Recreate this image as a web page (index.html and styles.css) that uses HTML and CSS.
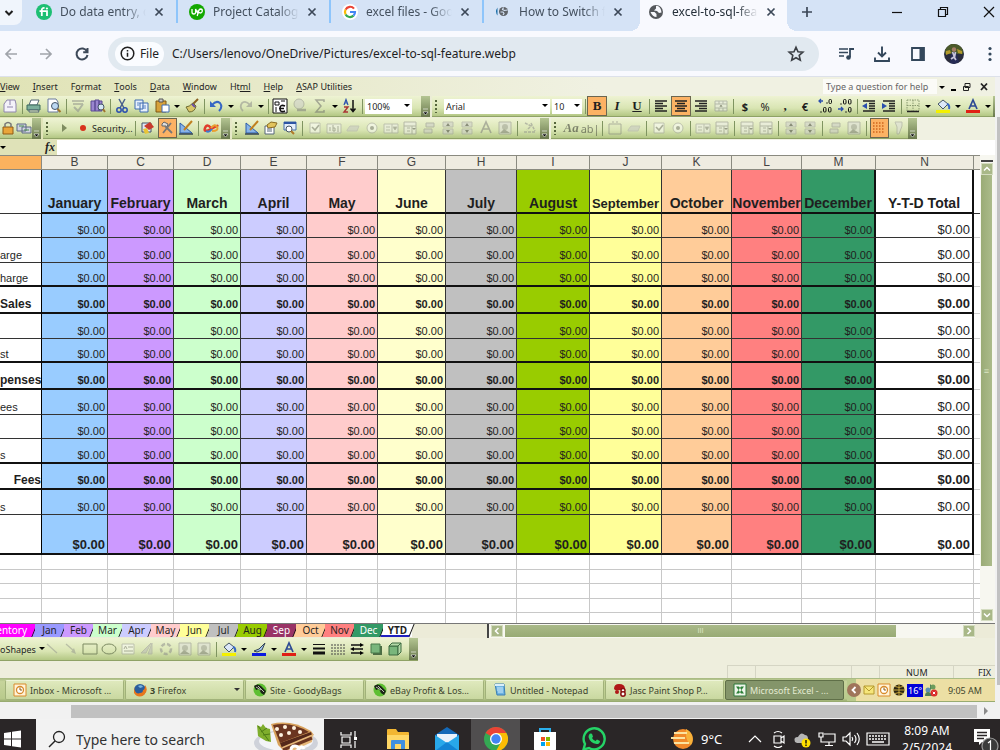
FILE: index.html
```html
<!DOCTYPE html>
<html lang="en">
<head>
    <meta charset="UTF-8">
    <meta name="viewport" content="width=device-width, initial-scale=1.0">
    <title>excel-to-sql-feature.webp</title>
    <link rel="stylesheet" href="styles.css">
</head>
<body>
    <!-- Browser tabs -->
    <div class="tabstrip">
        <button class="tab-search" aria-label="Search tabs"><svg width="10" height="10" viewBox="0 0 10 10"><path d="M1.500 3l3.500 3.500L8.500 3" fill="none" stroke="#1f1f1f" stroke-width="2"/></svg></button>
        <div class="tab">
            <svg width="16" height="16" viewBox="0 0 16 16"><circle cx="8" cy="8" r="8" fill="#1dbf73"/><path d="M3.500 7.200h7.500V12M5.800 12V6q0-2.300 2.700-2" fill="none" stroke="#fff" stroke-width="1.800"/><circle cx="10.900" cy="4.500" r="1.100" fill="#fff"/></svg>
            <span class="tab-title">Do data entry, c</span>
            <button class="close" aria-label="Close tab"><svg width="10" height="10" viewBox="0 0 10 10"><path d="M1.500 1.500l7 7m0-7l-7 7"/></svg></button>
        </div>
        <div class="tab">
            <svg width="16" height="16" viewBox="0 0 16 16"><circle cx="8" cy="8" r="8" fill="#14a800"/><path d="M3 5v3q0 2 1.800 2T6.600 8V5q1 3.500 3 5M8.200 12l1.300-5q.7-2 2.200-2 1.800.2 1.600 2.200-.3 1.800-2 1.800-1.600-.2-3-2.500" fill="none" stroke="#fff" stroke-width="1.300"/></svg>
            <span class="tab-title">Project Catalog</span>
            <button class="close" aria-label="Close tab"><svg width="10" height="10" viewBox="0 0 10 10"><path d="M1.500 1.500l7 7m0-7l-7 7"/></svg></button>
        </div>
        <div class="tab">
            <svg width="16" height="16" viewBox="0 0 16 16"><circle cx="8" cy="8" r="8" fill="#fff"/><g fill="none" stroke-width="2.200"><path d="M12 4.600A5 5 0 0 0 3.600 5.600" stroke="#ea4335"/><path d="M3.600 5.600a5 5 0 0 0 0 4.800" stroke="#fbbc05"/><path d="M3.600 10.400A5 5 0 0 0 11.500 11.600" stroke="#34a853"/><path d="M11.500 11.600A5 5 0 0 0 13 8H8" stroke="#4285f4"/></g></svg>
            <span class="tab-title">excel files - Goo</span>
            <button class="close" aria-label="Close tab"><svg width="10" height="10" viewBox="0 0 10 10"><path d="M1.500 1.500l7 7m0-7l-7 7"/></svg></button>
        </div>
        <div class="tab last">
            <svg width="16" height="16" viewBox="0 0 16 16"><path d="M2.500 3.500q-3 4 0 8z" fill="#1b6ea8"/><circle cx="8.500" cy="7.500" r="4.500" fill="#5f6368"/><path d="M5.500 8h2.500l1 1.500-1 1.500M8.500 3.500l-1 2 2 1 3-.5" fill="none" stroke="#d5e3f6" stroke-width="1.200"/></svg>
            <span class="tab-title">How to Switch f</span>
            <button class="close" aria-label="Close tab"><svg width="10" height="10" viewBox="0 0 10 10"><path d="M1.500 1.500l7 7m0-7l-7 7"/></svg></button>
        </div>
        <div class="tab active">
            <svg width="16" height="16" viewBox="0 0 16 16"><circle cx="8" cy="8" r="7" fill="#55585c"/><path d="M2.500 8h4l2 2v3q-4 0-6-5zM8 2v2.500l-2 2 3 .5 2 2 2.500-.5Q13 3 9 1.800z" fill="#f8f9fe"/></svg>
            <span class="tab-title">excel-to-sql-fea</span>
            <button class="close" aria-label="Close tab"><svg width="10" height="10" viewBox="0 0 10 10"><path d="M1.500 1.500l7 7m0-7l-7 7"/></svg></button>
        </div>
        <button class="new-tab" aria-label="New tab"><svg width="12" height="12" viewBox="0 0 12 12"><path d="M6 1v10M1 6h10" stroke="#3c4858" stroke-width="1.700"/></svg></button>
        <div class="window-buttons">
            <button aria-label="Minimize"><svg width="12" height="12" viewBox="0 0 12 12"><path d="M1 6.500h10"/></svg></button>
            <button aria-label="Restore"><svg width="12" height="12" viewBox="0 0 12 12"><path d="M1.500 3.500h7v7h-7zM3.500 3.500v-2h7v7h-2"/></svg></button>
            <button aria-label="Close"><svg width="12" height="12" viewBox="0 0 12 12"><path d="M1 1l10 10M11 1L1 11"/></svg></button>
        </div>
    </div>

    <!-- Address bar -->
    <div class="navbar">
        <button aria-label="Back"><svg width="16" height="16" viewBox="0 0 16 16"><path d="M14 8H3M8 3L3 8l5 5" stroke="#a0a4aa"/></svg></button>
        <button aria-label="Forward"><svg width="16" height="16" viewBox="0 0 16 16"><path d="M2 8h11M8 3l5 5-5 5" stroke="#a0a4aa"/></svg></button>
        <button aria-label="Reload"><svg width="16" height="16" viewBox="0 0 16 16"><path d="M13 5.500A5.500 5.500 0 1 0 13.500 9M13.500 2v4.300H9.200" stroke="#3c4858" stroke-width="2"/></svg></button>
        <div class="omnibox">
            <button class="chip"><svg width="15" height="15" viewBox="0 0 15 15"><circle cx="7.500" cy="7.500" r="6.300" stroke="#1f1f1f" stroke-width="1.500"/><path d="M7.500 6.700v4M7.500 4v1.500" stroke="#1f1f1f" stroke-width="1.500"/></svg>File</button>
            <input type="text" aria-label="Address" value="C:/Users/lenovo/OneDrive/Pictures/excel-to-sql-feature.webp">
            <button aria-label="Bookmark"><svg width="18" height="18" viewBox="0 0 18 18"><path d="M9 2.200l2 4.500 4.900.5-3.700 3.200 1.100 4.800L9 12.700l-4.300 2.500 1.100-4.800-3.700-3.200 4.900-.5z" stroke="#3b3f44" stroke-width="1.600"/></svg></button>
        </div>
        <button aria-label="Media"><svg width="18" height="18" viewBox="0 0 18 18"><path d="M2 4h9M2 7.500h9M2 11h5" stroke="#33475b" stroke-width="1.700"/><path d="M13 12V4h4" stroke="#33475b" stroke-width="1.800"/><circle cx="11.500" cy="12.500" r="2.300" fill="#33475b"/></svg></button>
        <button aria-label="Downloads"><svg width="18" height="18" viewBox="0 0 18 18"><path d="M9 1.500V11M5 7.500L9 11.500l4-4M2 12.500V16h14v-3.500" stroke="#33475b" stroke-width="1.900"/></svg></button>
        <button aria-label="Side panel"><svg width="18" height="18" viewBox="0 0 18 18"><path d="M3 3h12v12H3z" stroke="#33475b" stroke-width="1.800"/><path d="M10.500 3H15v12h-4.500z" fill="#33475b"/></svg></button>
        <button aria-label="Profile"><svg width="20" height="20" viewBox="0 0 20 20"><circle cx="10" cy="10" r="10" fill="#2a2c3c"/><path d="M1 6q4-7 9-6 6 0 9 6v4H1z" fill="#4b5a2a"/><path d="M2 7l4-1 1 3-5 2zM13 5l5 2v3l-4-1z" fill="#b49a2c"/><circle cx="10" cy="5.500" r="2.200" fill="#a57b66"/><path d="M6 19l1-9 3-2 3 2 2 8-5 2z" fill="#272c56"/><path d="M8.500 8l2 5 1-5M7 15l3-2 2 3" stroke="#c9c5da" fill="none"/></svg></button>
        <button aria-label="Menu"><svg width="18" height="18" viewBox="0 0 18 18" fill="#33475b"><g fill="#33475b"><circle cx="9" cy="3.500" r="1.600"/><circle cx="9" cy="9" r="1.600"/><circle cx="9" cy="14.500" r="1.600"/></g></svg></button>
    </div>

    <div class="viewport">
        <main class="excel">
            <div class="menubar">
                <button><u>V</u>iew</button>
                <button><u>I</u>nsert</button>
                <button>F<u>o</u>rmat</button>
                <button><u>T</u>ools</button>
                <button><u>D</u>ata</button>
                <button><u>W</u>indow</button>
                <button>Ht<u>ml</u></button>
                <button><u>H</u>elp</button>
                <button><u>A</u>SAP Utilities</button>
                <input type="text" class="ask" aria-label="Help" placeholder="Type a question for help">
                <svg class="mdi" width="54" height="10" viewBox="0 0 54 10"><path d="M2 4h6L5 7z"/><path d="M14 7h5v2h-5z"/><path d="M28 1.500h5v4h-5zM26.500 4.500h5v4h-5z" fill="none" stroke="#222"/><path d="M44 1.500l6 6.500m0-6.500L44 8" stroke="#222" stroke-width="1.800"/></svg>
            </div>
            <div class="toolrow" id="row1"></div>
            <div class="toolrow" id="row2"></div>
            <div class="formula">
                <div class="namebox"><svg width="8" height="5" viewBox="0 0 8 5"><path d="M0 1h6L3 4z"/></svg><i>fx</i></div>
                <input type="text" aria-label="Formula">
            </div>

            <div class="sheet">
                <div class="grid">
                    <table>
                        <colgroup>
                            <col class="w-42"><col class="w-66"><col class="w-66"><col class="w-67"><col class="w-66"><col class="w-71"><col class="w-68"><col class="w-71"><col class="w-73"><col class="w-72"><col class="w-70"><col class="w-70"><col class="w-74"><col class="w-98"><col>
                        </colgroup>
                        <thead id="letters"></thead>
                        <tbody id="cells"></tbody>
                    </table>
                </div>
                <div class="vscroll">
                    <span class="split"></span>
                    <button aria-label="Scroll up"><svg width="8" height="8" viewBox="0 0 8 8"><path d="M1 5.500l3-3 3 3"/></svg></button>
                    <span class="thumb">≡</span>
                    <button aria-label="Scroll down"><svg width="8" height="8" viewBox="0 0 8 8"><path d="M1 2.500l3 3 3-3"/></svg></button>
                </div>
            </div>

            <div class="sheetbar">
                <div class="sheettabs" id="sheettabs"></div>
                <div class="hscroll">
                    <button aria-label="Scroll left"><svg width="8" height="8" viewBox="0 0 8 8"><path d="M5.500 1l-3 3 3 3"/></svg></button>
                    <span class="thumb">ııı</span>
                    <button aria-label="Scroll right"><svg width="8" height="8" viewBox="0 0 8 8"><path d="M2.500 1l3 3-3 3"/></svg></button>
                </div>
            </div>
            <div class="drawrow" id="row3"></div>
            <div class="status"><span></span><span class="wide"></span><span></span><span class="num">NUM</span><span class="fix">FIX</span></div>

            <div class="xpbar">
                <button><svg width="14" height="14" viewBox="0 0 14 14"><path d="M1 1h12v12H1z" fill="#fff3d8" stroke="#d98b2b"/><circle cx="7" cy="7" r="3.500" fill="#fff" stroke="#d98b2b" stroke-width="1.300"/><path d="M7 4.500V7h2" stroke="#8a5a10" fill="none"/></svg><span>Inbox - Microsoft ...</span></button>
                <button><svg width="14" height="14" viewBox="0 0 14 14"><circle cx="7" cy="7" r="6" fill="#2a5d9c"/><path d="M1 4q1 8 6 6 3 0 3-3 2 0 2-5 4 5-1 10-6 4-10-2z" fill="#e8761c"/><path d="M5 3q4-2 5 1L7 5z" fill="#7ab4de"/></svg><span><b>3</b> Firefox</span><svg class="end" width="6" height="4" viewBox="0 0 6 4"><path d="M0 0h6L3 3z" fill="#333"/></svg></button>
                <button><svg width="14" height="14" viewBox="0 0 14 14"><circle cx="7" cy="7" r="6.500" fill="#5fbf33"/><path d="M1 3q4-3 7 0l5 5-2 4-3-2-2-4-3 1z" fill="#1c2416"/><path d="M3 4l5 3M5 3l6 6" stroke="#b7bfae"/></svg><span>Site - GoodyBags</span></button>
                <button><svg width="14" height="14" viewBox="0 0 14 14"><circle cx="7" cy="7" r="6.500" fill="#5fbf33"/><path d="M1 3q4-3 7 0l5 5-2 4-3-2-2-4-3 1z" fill="#1c2416"/><path d="M3 4l5 3M5 3l6 6" stroke="#b7bfae"/></svg><span>eBay Profit &amp; Los...</span></button>
                <button><svg width="14" height="14" viewBox="0 0 14 14"><path d="M2 1h9l1 11H4z" fill="#6eb4e2" stroke="#3c7fb4"/><path d="M2 1h9v2H2z" fill="#d9eefa"/><path d="M4 5h6M4 7h6M5 9h5" stroke="#d0eafa"/></svg><span>Untitled - Notepad</span></button>
                <button><svg width="14" height="14" viewBox="0 0 14 14"><path d="M1 6q0-5 5-5 6 0 6 5-2 1-5 1-5 1-6-1z" fill="#b01818"/><circle cx="4" cy="9" r="2" fill="#b01818"/><circle cx="10" cy="7.500" r="2" fill="#fff" stroke="#8a1010" stroke-width="1.500"/><circle cx="10" cy="11" r="2.200" fill="#fff" stroke="#8a1010" stroke-width="1.500"/></svg><span>Jasc Paint Shop P...</span></button>
                <button class="on"><svg width="14" height="14" viewBox="0 0 14 14"><path d="M1 1h12v12H1z" fill="#eef5ea" stroke="#2f7a3a"/><path d="M3 3.500h3l5 7H8zM11 3.500H8l-5 7h3z" fill="#2c8038"/></svg><span>Microsoft Excel - ...</span></button>
                <div class="tray">
                    <svg width="14" height="14" viewBox="0 0 14 14"><circle cx="7" cy="7" r="7" fill="#a0755a"/><path d="M8.500 4l-3 3 3 3" fill="none" stroke="#fff" stroke-width="1.800"/></svg>
                    <svg width="14" height="14" viewBox="0 0 14 14"><path d="M2 3h10v8H2z" fill="#f6e67a" stroke="#b59a2e"/><path d="M2 3l5 5 5-5" fill="none" stroke="#b59a2e"/></svg>
                    <svg width="14" height="14" viewBox="0 0 14 14"><path d="M1 1h12v12H1z" fill="#fff3d8" stroke="#d98b2b"/><circle cx="7" cy="7" r="3.500" fill="#fff" stroke="#d98b2b" stroke-width="1.300"/><path d="M7 4.500V7h2" stroke="#8a5a10" fill="none"/></svg>
                    <svg width="14" height="14" viewBox="0 0 14 14"><circle cx="7" cy="7" r="5.500" fill="#2b2410"/><path d="M7 1v12M1 7h12M3 3.500q4 2 8 0M3 10.500q4-2 8 0" stroke="#c9a83c" fill="none"/></svg>
                    <span class="temp">16°</span>
                    <svg width="14" height="14" viewBox="0 0 14 14"><circle cx="4" cy="7" r="2.500" fill="#5c8fb0"/><path d="M1 13q0-4 3-4t4 4zM6 1l3 3-3 3z" fill="#4f7d58"/><circle cx="9" cy="4" r="2.500" fill="#6c9c5c"/><circle cx="10" cy="10" r="3.500" fill="#d92a2a"/><path d="M8.800 8.800l2.400 2.400m0-2.400l-2.400 2.400" stroke="#fff"/></svg>
                    <span class="time">9:05 AM</span>
                </div>
            </div>
        </main>
        <div class="page-scroll"><span></span></div>
    </div>
    <div class="page-hscroll"><span></span><svg width="6" height="8" viewBox="0 0 6 8"><path d="M1 0l4 4-4 4z" fill="#8b8b8b"/></svg></div>

    <!-- Windows taskbar -->
    <div class="taskbar">
        <button class="start" aria-label="Start"><svg width="18" height="18" viewBox="0 0 18 18"><path d="M1 3l7-1v6.500H1zM9 1.800L18 .5v8H9zM1 9.500h7V16l-7-1zM9 9.500h9v8l-9-1.300z" fill="#fff"/></svg></button>
        <label class="search">
            <svg width="18" height="18" viewBox="0 0 18 18"><circle cx="11" cy="7" r="5.500" fill="none" stroke="#222" stroke-width="1.300"/><path d="M7 11l-6 6" stroke="#222" stroke-width="1.400"/></svg>
            <input type="text" aria-label="Search" placeholder="Type here to search">
            <svg class="pie" width="66" height="36" viewBox="0 0 66 36"><ellipse cx="34" cy="22" rx="32" ry="13" fill="#cfd2da"/><ellipse cx="34" cy="20" rx="27" ry="10" fill="#f3f4f8"/><path d="M5 4l4 2 2-3 3 4 4 1 1 13-5-1-5-3-3-2z" fill="#7fae2c"/><path d="M6 5l11 15M9 11l6-4M11 14l7-1" stroke="#4f7d16" fill="none"/><path d="M19 3q20-5 40 7l3 4-30 16-6-6z" fill="#d9a25c"/><path d="M21 4q18-4 36 7L28 22z" fill="#6b3520"/><path d="M28 22l31-11 1 3-30 13z" fill="#54281a"/><path d="M30 26l31-13-1 8-28 13z" fill="#e6b87a"/><path d="M31 29l29-12" stroke="#6b3520" stroke-width="3"/><g fill="#fff2df"><circle cx="25" cy="8" r="2"/><circle cx="33" cy="6" r="2"/><circle cx="42" cy="7" r="2"/><circle cx="29" cy="14" r="2"/><circle cx="37" cy="12" r="2"/><circle cx="48" cy="11" r="2"/></g><path d="M39 29q0-4 4-4t3 4q4-6 6-1" fill="none" stroke="#fff" stroke-width="3"/></svg>
        </label>
        <div class="apps">
            <button aria-label="Task view"><svg width="18" height="18" viewBox="0 0 18 18"><path d="M1 2v3h10V2M2 7h8v6H2zM1 18v-3h10v3M15 1v6M15 11v7" fill="none" stroke="#fff" stroke-width="1.200"/><path d="M14 7h3v3h-3z" fill="#fff"/></svg></button>
            <button aria-label="Explorer"><svg width="24" height="24" viewBox="0 0 24 24"><path d="M1 3q0-1 1-1h8l2 3h10q1 0 1 1v16H1z" fill="#f2b632"/><path d="M1 8h22v14H1z" fill="#ffd766"/><path d="M5 22v-8q0-1 1-1h12q1 0 1 1v8h-4v-5H9v5z" fill="#3f8fe0"/></svg></button>
            <button aria-label="Mail"><svg width="24" height="24" viewBox="0 0 24 24"><path d="M0 8l12-8 12 8v16H0z" fill="#1469b8"/><path d="M2 7h20v9H2z" fill="#e9f2fb"/><path d="M0 8l12 8 12-8v16H0z" fill="#28a8ea"/><path d="M0 24l12-9 12 9z" fill="#1384d4"/></svg></button>
            <button class="on" aria-label="Chrome"><svg width="24" height="24" viewBox="0 0 24 24"><circle cx="12" cy="12" r="12" fill="#34a853"/><path d="M12 12L1.600 6A12 12 0 0 1 22.400 6H12z" fill="#ea4335"/><path d="M12 6h10.400A12 12 0 0 1 12 24l5-9z" fill="#fbbc05"/><circle cx="12" cy="12" r="6" fill="#fff"/><circle cx="12" cy="12" r="4.700" fill="#4285f4"/></svg></button>
            <button aria-label="Store"><svg width="24" height="24" viewBox="0 0 24 24"><path d="M7 6V2h10v4" fill="none" stroke="#2bb0ee" stroke-width="2"/><path d="M1 5h22v17q0 2-2 2H3q-2 0-2-2z" fill="#fff"/><path d="M8 10h4v4H8z" fill="#f25022"/><path d="M13 10h4v4h-4z" fill="#7fba00"/><path d="M8 15h4v4H8z" fill="#00a4ef"/><path d="M13 15h4v4h-4z" fill="#ffb900"/></svg></button>
            <button aria-label="WhatsApp"><svg width="24" height="24" viewBox="0 0 24 24"><path d="M1.500 22.500l1.500-5.500A10.500 10.500 0 1 1 7 21z" fill="#2a2627" stroke="#25d366" stroke-width="2.400"/><path d="M8 6.500l2 .2 1 3-1 1.300q1 2 3.500 3l1.500-1.500 3 1.400q0 3-3.500 3.200Q8 16 6.500 10q0-2.500 1.500-3.500z" fill="#25d366"/></svg></button>
        </div>
        <div class="systray">
            <svg width="24" height="24" viewBox="0 0 24 24"><circle cx="13" cy="12" r="10" fill="#f0892a"/><path d="M16 2a11 11 0 0 1 5 16q-6-4-5-16z" fill="#f7b23a"/><path d="M4 6h13M1 11h14M4 16h15" stroke="#fbe3a0" stroke-width="2.200"/></svg>
            <span class="deg">9°C</span>
            <svg width="24" height="18" viewBox="0 0 24 18"><path d="M6 12l6-6 6 6"/></svg>
            <svg width="24" height="18" viewBox="0 0 24 18"><path d="M7 6h7v7H7zM14 8l3-2v7l-3-2M7 3q4-3 8 0M7 16q4 3 8 0"/></svg>
            <svg width="24" height="18" viewBox="0 0 24 18"><path d="M4 12q-2-5 3-5 3-6 7-2 3 0 3 4v4H6z" fill="#b5b5b5" stroke="none"/><circle cx="15" cy="13" r="4.500" fill="#ffe000" stroke="none"/><path d="M15 10v3.500m0 1v1.500" stroke="#111" stroke-width="1.400"/></svg>
            <svg width="24" height="18" viewBox="0 0 24 18"><path d="M9 4h11v8H9M4 3h4v4H4zM6 7v5h3M10 15.500h8M14 12v3"/></svg>
            <svg width="24" height="18" viewBox="0 0 24 18"><path d="M4 7h3l4-4v12l-4-4H4zM13 7q1.500 2 0 4M15.500 5q3 4 0 8M18 3q4.500 6 0 12"/></svg>
            <svg width="30" height="18" viewBox="0 0 30 18"><path d="M4 3h22v12H4z"/><path d="M6 6h18M6 9h18" stroke-dasharray="2 1" stroke-width="1.500"/><path d="M9 12h12" stroke-width="1.500"/></svg>
            <div class="clock"><span>8:09 AM</span><span>2/5/2024</span></div>
            <svg width="30" height="30" viewBox="0 0 30 30"><path d="M3 5h16v13h-8l-3 3v-3H3z" fill="#fff" stroke="none"/><path d="M6 8.500h10M6 11.500h10M6 14.500h7" stroke="#2a2627" stroke-width="1.300"/><circle cx="19" cy="22" r="8" fill="#3b3b3b" stroke="#9a9a9a"/><path d="M17 19l2.500-2v9"/></svg>
        </div>
    </div>
    <script src="script.js"></script>
</body>
</html>
```

FILE: styles.css
```css
* {
    box-sizing: border-box;
}
html, body {
    height: 100%;
}
body {
    margin: 0;
    display: flex;
    flex-direction: column;
    overflow: hidden;
    font-family: "Noto Sans", sans-serif;
    font-size: 12px;
    color: #1f1f1f;
    background-color: #f0f0f0;
}
body > div {
    flex: none;
}
button {
    background: none;
    border: none;
    padding: 0;
    margin: 0;
    font: inherit;
    color: inherit;
    display: flex;
    align-items: center;
    justify-content: center;
    white-space: nowrap;
}
input, select {
    font: inherit;
    color: inherit;
    border: none;
    padding: 0;
    margin: 0;
    background: none;
    min-width: 0;
}
svg {
    flex: none;
    display: block;
}

/* browser tabs */
.tabstrip {
    height: 31px;
    display: flex;
    background-color: #d5e3f6;
}
.tab-search {
    width: 22px;
    height: 25px;
    margin-right: 3px;
    padding-right: 5px;
    background-color: #f0f5fc;
    border-radius: 0 0 8px 0;
}
.tab {
    width: 153px;
    height: 23px;
    padding: 0 12px 0 11px;
    display: flex;
    align-items: center;
    gap: 8px;
    border-right: 2px solid #8ec5fb;
    color: #44505e;
}
.tab.last, .tab.active {
    border-color: transparent;
}
.tab-title {
    flex: 1;
    min-width: 0;
    overflow: hidden;
    white-space: nowrap;
    -webkit-mask-image: linear-gradient(90deg, #000 75%, transparent);
    mask-image: linear-gradient(90deg, #000 75%, transparent);
}
.close svg {
    stroke: #3c4858;
    stroke-width: 1.7;
}
.tab.active {
    position: relative;
    height: 31px;
    width: 147px;
    margin: 0 3px;
    padding: 0 9px 8px 8px;
    background-color: #f8f9fe;
    color: #26303a;
}
.tab.active::before, .tab.active::after {
    content: "";
    position: absolute;
    bottom: 0;
    width: 10px;
    height: 10px;
}
.tab.active::before {
    right: 100%;
    background: radial-gradient(circle at 0 0, transparent 10px, #f8f9fe 10px);
}
.tab.active::after {
    left: calc(100% + 2px);
    background: radial-gradient(circle at 100% 0, transparent 10px, #f8f9fe 10px);
}
.new-tab {
    width: 34px;
    height: 23px;
}
.window-buttons {
    display: flex;
    margin-left: auto;
    margin-right: -12px;
    height: 23px;
}
.window-buttons button {
    width: 46px;
}
.window-buttons svg {
    fill: none;
    stroke: #111;
    stroke-width: 1.2;
}

/* address bar */
.navbar {
    height: 46px;
    display: flex;
    align-items: center;
    background-color: #f8f9fe;
    border-bottom: 1px solid #dde1ea;
    margin-right: -8px;
    padding-left: 2px;
}
.navbar svg {
    fill: none;
    stroke-width: 1.7;
}
.navbar > button {
    width: 36px;
}
.navbar > button:first-child {
    width: 26px;
    padding-right: 8px;
}
.omnibox {
    flex: 1;
    height: 34px;
    margin: 0 9px 0 8px;
    padding: 0 14px 0 7px;
    display: flex;
    align-items: center;
    gap: 8px;
    background-color: #e1e9f0;
    border-radius: 17px;
}
.omnibox input {
    flex: 1;
}
.chip {
    height: 24px;
    width: 49px;
    gap: 5px;
    border-radius: 12px;
    background-color: #fafcff;
}

/* image shown in the page */
.viewport {
    display: flex;
}
.excel {
    flex: 1;
    min-width: 0;
    font-size: 9px;
    background-color: #eeeedd;
    overflow: hidden;
}
.page-scroll {
    width: 5px;
    padding: 40px 0 17px 2px;
    background-color: #f1f1f1;
    display: flex;
}
.page-scroll span {
    flex: 1;
    background-color: #c1c1c1;
}
.page-hscroll {
    height: 17px;
    padding: 2px 11px 1px 71px;
    display: flex;
    align-items: center;
    gap: 6px;
    background-color: #f1f1f1;
}
.page-hscroll span {
    flex: 1;
    height: 13px;
    background-color: #c1c1c1;
}

/* menu and toolbars */
.menubar {
    height: 19px;
    display: flex;
    align-items: center;
    gap: 13px;
    background: linear-gradient(90deg, #e0e3b6, #f0f1e2 60%);
}
.ask {
    width: 114px;
    height: 15px;
    margin-left: auto;
    padding-left: 3px;
    background-color: #fbfbf7;
}
.ask::placeholder {
    color: #666;
    opacity: 1;
}
.mdi {
    margin-left: -13px;
    margin-right: 4px;
}
.toolrow {
    height: 22px;
    display: flex;
    gap: 2px;
    overflow: hidden;
    background: linear-gradient(90deg, #e0e3b6, #f0f1e2 60%);
}
.bar {
    display: flex;
    align-items: center;
    height: 21px;
    background: linear-gradient(#eef3d3, #d9e5b3 60%, #b3c784);
    border-bottom: 1px solid #8fa266;
}
.bar.main {
    width: 430px;
}
.bar.fill {
    flex: 1;
    min-width: 0;
}
.bar > * {
    flex: none;
}
.tool {
    width: 20px;
    height: 20px;
}
#row2 .tool, #row3 .tool {
    width: 19px;
}
#row2 .half {
    width: 16px;
}
.tool.off {
    opacity: .5;
    filter: grayscale(.8);
}
.tool.on {
    background-color: #fcb264;
    border: 1px solid #6b6650;
}
.glyph {
    font-size: 11px;
}
.glyph.serif {
    font-family: "Liberation Serif", serif;
    font-size: 13px;
    font-weight: bold;
}
.drop {
    width: 10px;
    height: 20px;
}
#row3 .drop {
    width: 11px;
}
.sep {
    width: 1px;
    height: 15px;
    margin: 0 1px 0 2px;
    background-color: #7f9460;
}
#row2 .sep, #row3 .sep {
    margin: 0 3px 0 2px;
}
.grip {
    width: 3px;
    height: 13px;
    margin: 0 5px 0 3px;
    background: repeating-linear-gradient(#56663c 0 2px, transparent 2px 4px);
    background-size: 2px 100%;
    background-repeat: no-repeat;
}
.cap {
    width: 9px;
    height: 21px;
    margin-left: auto;
    padding-top: 11px;
    background: linear-gradient(#b4c592, #69784c);
}
.combo {
    display: flex;
    align-items: center;
    height: 15px;
    margin: 0 1px;
    background-color: #fff;
}
.combo select {
    appearance: none;
    flex: 1;
    padding-left: 2px;
}
.combo.zoom {
    width: 47px;
}
.combo.font {
    width: 106px;
}
.combo.size {
    width: 30px;
}
.combo svg {
    margin: 0 2px;
}
.formula {
    height: 15px;
    display: flex;
    background-color: #fff;
}
.formula input {
    flex: 1;
}
.namebox {
    width: 57px;
    padding-right: 2px;
    display: flex;
    align-items: center;
    justify-content: space-between;
    background-color: #dfe2b8;
}
.namebox i {
    font-family: "Liberation Serif", serif;
    font-size: 12px;
    font-weight: bold;
}

/* worksheet */
.sheet {
    display: flex;
    height: 468px;
}
.grid {
    flex: 1;
    overflow: hidden;
    background-color: #fff;
}
table {
    width: 100%;
    table-layout: fixed;
    border-collapse: separate;
    border-spacing: 0;
    font-family: "Liberation Sans", Arial, sans-serif;
    font-size: 11px;
    line-height: 13px;
}
.w-42 { width: 42px; }
.w-66 { width: 66px; }
.w-67 { width: 67px; }
.w-68 { width: 68px; }
.w-70 { width: 70px; }
.w-71 { width: 71px; }
.w-72 { width: 72px; }
.w-73 { width: 73px; }
.w-74 { width: 74px; }
.w-98 { width: 98px; }
th, td {
    padding: 0 2px 0 0;
    border-right: 1px solid #333;
    border-bottom: 1px solid #333;
    text-align: right;
    vertical-align: bottom;
    white-space: nowrap;
    overflow: hidden;
}
#letters th {
    height: 15px;
    padding: 0;
    text-align: center;
    vertical-align: middle;
    font-weight: normal;
    font-size: 12px;
    color: #444;
    background-color: #efece1;
    border-top: 1px solid #8a8a80;
    border-color: #8a8a80;
}
#letters th:first-child {
    background-color: #fbb25e;
}
#letters th:last-child, #cells td:last-child {
    border-right: none;
}
.months th {
    height: 44px;
    padding: 0;
    text-align: center;
    font-size: 14px;
    line-height: 17px;
    border-bottom: 2px solid #111;
}
.months .sep-m {
    font-size: 13px;
}
.h24 { height: 24px; }
.h25 { height: 25px; }
.h26 { height: 26px; }
.h27 { height: 27px; }
.h40 { height: 40px; }
.strong td, .above td {
    border-bottom: 2px solid #111;
}
.strong td {
    font-weight: bold;
    padding-bottom: 1px;
}
.grand td {
    font-size: 13px;
    padding-bottom: 2px;
}
.money td:nth-child(14) {
    font-size: 13px;
    padding-bottom: 1px;
}
.strong td:nth-child(14) {
    padding-bottom: 2px;
}
#cells td:first-child {
    text-align: left;
    padding-right: 0;
    background-color: #fff;
}
#cells .strong td:first-child {
    font-size: 12px;
}
#cells .toright td:first-child {
    text-align: right;
}
#cells .money > :nth-child(13), #cells .months > :nth-child(13),
#cells .money > :nth-child(14), #cells .months > :nth-child(14) {
    border-right: 2px solid #111;
}
#cells .money > :first-child, #cells .months > :first-child {
    border-right: 1px solid #000;
}
#cells .money td:last-child {
    border-bottom: 1px solid #d0d0d0;
}
#cells .empty td {
    height: 14px;
    line-height: 10px;
    padding: 0;
    border-color: #c8c8c8;
}
#cells .empty.tall td {
    height: 15px;
}
.jan { background-color: #99ccff; }
.feb { background-color: #cc99ff; }
.mar { background-color: #ccffcc; }
.apr { background-color: #ccccff; }
.may { background-color: #ffcccc; }
.jun { background-color: #ffffcc; }
.jul { background-color: #c0c0c0; }
.aug { background-color: #99cc00; }
.sep-m { background-color: #ffff99; }
.oct { background-color: #ffcc99; }
.nov { background-color: #ff8080; }
.dec { background-color: #339966; }

.vscroll {
    width: 15px;
    padding: 5px 2px 2px 1px;
    display: flex;
    flex-direction: column;
    background-color: #f7f7f0;
}
.vscroll button, .hscroll button {
    width: 12px;
    height: 12px;
    background-color: #a9b888;
    border: 1px solid #d4dcc0;
}
.vscroll button svg, .hscroll button svg {
    fill: none;
    stroke: #fff;
    stroke-width: 1.5;
}
.split {
    height: 2px;
    margin-bottom: 1px;
    background-color: #444;
}
.vscroll .thumb {
    flex: 1;
    width: 11px;
    margin-bottom: 43px;
    display: flex;
    align-items: center;
    justify-content: center;
    color: #dbe4c4;
    background: linear-gradient(90deg, #9aab76, #abbb8a);
}

/* sheet tabs */
.sheetbar {
    height: 15px;
    display: flex;
    border-top: 1px solid #777;
    background-color: #ecebd8;
}
.sheettabs {
    display: flex;
    flex: 1;
    font-size: 10px;
    line-height: 13px;
}
.sheettabs button {
    position: relative;
    z-index: 0;
    width: 29px;
    height: 13px;
}
.sheettabs button::before {
    content: "";
    position: absolute;
    z-index: -1;
    inset: 0;
    background-color: inherit;
    border-right: 1px solid #111;
    transform: skewX(-22deg);
}
.sheettabs button.first {
    width: 35px;
    padding: 0 8px 0 0;
    justify-content: flex-end;
}
.sheettabs .current {
    font-weight: bold;
}
.sheettabs .current::before {
    border-bottom: 2px solid #2020c0;
}
.sheettabs .light {
    color: #fff;
}
.hscroll {
    width: 508px;
    padding: 0 20px 0 2px;
    border-left: 2px solid #444;
    display: flex;
    align-items: center;
    background: linear-gradient(90deg, #f7f7f0 96%, #ecebd8 96%);
}
.hscroll .thumb {
    flex: 1;
    height: 12px;
    margin: 0 67px 0 2px;
    font-size: 8px;
    line-height: 10px;
    text-align: center;
    color: #dbe4c4;
    background: linear-gradient(#a9b988, #98aa74);
}
.drawrow {
    height: 24px;
    display: flex;
}
.drawrow .bar {
    height: 23px;
    width: 418px;
}
.drawrow .cap {
    height: 22px;
}
.autoshapes {
    gap: 3px;
    margin-right: -2px;
}
.status {
    height: 16px;
    display: flex;
    justify-content: flex-end;
    align-items: center;
    padding-top: 2px;
}
.status span {
    height: 13px;
    width: 28px;
    line-height: 13px;
    border-left: 1px solid #d5d5c4;
    border-top: 1px solid #d5d5c4;
}
.status .wide {
    width: 96px;
}
.status .num {
    width: 74px;
    padding-left: 26px;
}
.status .fix {
    width: 42px;
    padding-right: 4px;
    text-align: right;
}

/* XP taskbar */
.xpbar {
    height: 24px;
    padding: 1px 0 1px 5px;
    display: flex;
    align-items: center;
    gap: 1px;
    background: linear-gradient(#a6b881, #c6d49b 15%, #b9ca8c 85%, #93a66c);
    color: #3c442c;
}
.xpbar button {
    flex: 1;
    min-width: 0;
    height: 20px;
    padding: 0 7px;
    gap: 3px;
    justify-content: flex-start;
    background: linear-gradient(#dfe9bd, #c9d8a0);
    border: 1px solid #a1b27a;
    border-top-color: #eef4d8;
    border-radius: 2px;
}
.xpbar button.on {
    background: #84956a;
    border-color: #5f6f48;
    color: #e5ecd4;
}
.xpbar .end {
    margin-left: auto;
    margin-right: -4px;
}
.tray {
    width: 148px;
    height: 22px;
    margin-left: 2px;
    padding-right: 13px;
    display: flex;
    align-items: center;
    gap: 1px;
    background: linear-gradient(90deg, #b9ca8c 9px, #ecdfa4 9px);
}
.time {
    margin-left: auto;
}
.temp {
    padding: 0 1px;
    background-color: #0000d8;
    color: #fff;
    font-size: 9px;
    line-height: 13px;
}

/* Windows taskbar */
.taskbar {
    height: 40px;
    display: flex;
    background-color: #2a2627;
    color: #fff;
}
.start {
    width: 36px;
    padding-right: 12px;
}
.search {
    width: 288px;
    padding: 0 6px 0 12px;
    display: flex;
    align-items: center;
    gap: 10px;
    background-color: #f2f2f2;
    color: #333;
    font-size: 14px;
}
.search input {
    flex: 1;
}
.search input::placeholder {
    color: #333;
    opacity: 1;
}
.apps {
    display: flex;
}
.apps button {
    width: 49px;
}
.apps .on {
    background-color: #504e4f;
}
.systray {
    margin-left: auto;
    margin-right: -1px;
    display: flex;
    align-items: center;
}
.systray svg {
    fill: none;
    stroke: #fff;
    stroke-width: 1.2;
}
.systray > svg:first-child {
    stroke: none;
}
.deg {
    width: 49px;
    padding-left: 7px;
    font-size: 13px;
}
.clock {
    width: 78px;
    padding-right: 10px;
    display: flex;
    flex-direction: column;
    align-items: center;
    line-height: 17px;
}
```

FILE: script.js
```js
// 16x16 toolbar icons
const icons = {
    save: '<path d="M2 6l3-4h8l1 4v8H2z" fill="#f4f2fa" stroke="#8f86ac"/><path d="M5 9h6M8 2v5" stroke="#8f86ac"/>',
    lock: '<path d="M3 7h10v7H3z" fill="#e9a53a" stroke="#8f5b14"/><path d="M5 7V4q3-3 6 0v3" fill="none" stroke="#777" stroke-width="1.500"/>',
    printdoc: '<path d="M1 4h9v7H1zM6 7h9v6H6z" fill="#cfd3e0" stroke="#5e6a84"/><path d="M3 6h5M8 10h5" stroke="#4b8f4b"/>',
    print: '<path d="M5 2h8l-2 5H3z" fill="#fff" stroke="#567"/><path d="M1 7h13v5H1z" fill="#7cae9c" stroke="#3c6a5c"/><path d="M3 12h9l1 2H3z" fill="#e6f2c0" stroke="#567"/>',
    preview: '<path d="M2 1h8l2 3v10H2z" fill="#fff" stroke="#6a7a9c"/><circle cx="9" cy="8" r="3.500" fill="#bcd8f2" stroke="#456"/><path d="M11.500 11l3 3" stroke="#a0742c" stroke-width="2"/>',
    spell: '<path d="M2 3h12M3 6h10" stroke="#777" stroke-width="1.500"/><path d="M4 9l4 4 5-7" fill="none" stroke="#789" stroke-width="2"/>',
    research: '<path d="M1 3h4v10H1zM5 2h4v11H5zM9 3h3v10H9z" fill="#9a86cf" stroke="#5b4a94"/><circle cx="11" cy="9" r="3" fill="#d6e8f7" stroke="#456"/><path d="M13 11l2 3" stroke="#a0742c" stroke-width="2"/>',
    cut: '<path d="M5 1l5 9M11 1L6 10" stroke="#4a5f8c" stroke-width="1.500"/><circle cx="5" cy="12" r="2.200" fill="none" stroke="#2b4fae" stroke-width="1.500"/><circle cx="11" cy="12" r="2.200" fill="none" stroke="#2b4fae" stroke-width="1.500"/>',
    copy: '<path d="M1 2h8v9H1zM6 5h8v9H6z" fill="#e8f1fc" stroke="#3f6bb0"/><path d="M8 8h4M8 10h4M3 5h3M3 7h2" stroke="#5c86c6"/>',
    paste: '<path d="M2 3h10v11H2z" fill="#d7a13a" stroke="#7c5713"/><path d="M5 1h4v3H5z" fill="#ccc" stroke="#555"/><path d="M8 7h7v7H8z" fill="#fff" stroke="#3f6bb0"/>',
    painter: '<path d="M14 1l-6 6" stroke="#8a5f20" stroke-width="2"/><path d="M9 5l3 3q-1 6-7 6L2 9q3 0 7-4z" fill="#d9c76a" stroke="#6d6a30"/><path d="M8 6l3 3" stroke="#6a4fa5" stroke-width="2"/>',
    undo: '<path d="M4 7q4-5 8-2 3 4-1 8" fill="none" stroke="#3767c4" stroke-width="2"/><path d="M2 3v6h6z" fill="#3767c4"/>',
    redo: '<path d="M12 7Q8 2 4 5q-3 4 1 8" fill="none" stroke="#888" stroke-width="1.800"/><path d="M14 3v6H8z" fill="#888"/>',
    euroconv: '<path d="M1 1h14v14H1z" fill="#fff" stroke="#111"/><path d="M3 4h4v3H3zM9 3h4M4 9v5" stroke="#111" fill="none"/><path d="M13 8q-5-2-5 2.500T13 13M7 10.500h5" fill="none" stroke="#111" stroke-width="1.600"/>',
    link: '<circle cx="7" cy="6" r="5" fill="#ccc" stroke="#888"/><path d="M5 12h4M9 12h5" stroke="#777" stroke-width="2.500"/>',
    sum: '<path d="M12 4V2H4l5 6-5 6h8v-2" fill="none" stroke="#666" stroke-width="1.500"/>',
    sort: '<path d="M2 7l2-5.500L6 7M3 5h2" fill="none" stroke="#2b4fae" stroke-width="1.200"/><path d="M2 9h4l-4 5h4" fill="none" stroke="#a33" stroke-width="1.400"/><path d="M11 2v11M8.500 10.500L11 13.500l2.500-3" fill="none" stroke="#111" stroke-width="1.500"/>',
    left: '<path d="M2 3h12M2 5.500h8M2 8h12M2 10.500h8M2 13h12" stroke="#222" stroke-width="1.300"/>',
    center: '<path d="M2 3h12M4 5.500h8M2 8h12M4 10.500h8M2 13h12" stroke="#222" stroke-width="1.300"/>',
    right: '<path d="M2 3h12M6 5.500h8M2 8h12M6 10.500h8M2 13h12" stroke="#222" stroke-width="1.300"/>',
    merge: '<path d="M2 3h12v10H2zM2 6h12M2 10h12M6 3v3M10 3v3M6 10v3M10 10v3" fill="#e9eef7" stroke="#7d8ba8"/><path d="M7 9l1-2 1 2" fill="none" stroke="#444"/>',
    incdec: '<path d="M6 3H2m2-2L2 3l2 2" fill="none" stroke="#2b4fae" stroke-width="1.300"/><circle cx="10" cy="5" r=".7"/><rect x="12" y="1.500" width="2.500" height="4" rx="1" fill="none" stroke="#111"/><circle cx="4" cy="14" r=".7"/><rect x="6.500" y="9.500" width="2.500" height="4.500" rx="1" fill="none" stroke="#111"/><rect x="11.500" y="9.500" width="2.500" height="4.500" rx="1" fill="none" stroke="#111"/>',
    decdec: '<circle cx="4" cy="6" r=".7"/><rect x="6.500" y="1.500" width="2.500" height="4.500" rx="1" fill="none" stroke="#111"/><rect x="11.500" y="1.500" width="2.500" height="4.500" rx="1" fill="none" stroke="#111"/><path d="M1 11h5M4 9l2 2-2 2" fill="none" stroke="#2b4fae" stroke-width="1.300"/><circle cx="9" cy="14" r=".7"/><rect x="11.500" y="9.500" width="2.500" height="4.500" rx="1" fill="none" stroke="#111"/>',
    outdent: '<path d="M2 3h12M8 5.500h6M8 8h6M8 10.500h6M2 13h12" stroke="#222" stroke-width="1.500"/><path d="M6 5v6L1 8z" fill="#2b4fae"/>',
    indent: '<path d="M2 3h12M8 5.500h6M8 8h6M8 10.500h6M2 13h12" stroke="#222" stroke-width="1.500"/><path d="M1 5v6l5-3z" fill="#2b4fae"/>',
    borders: '<path d="M2 2h12v11H2zM8 2v11M2 7.500h12" fill="none" stroke="#8a9a70" stroke-dasharray="1.500 1"/><path d="M2 13.500h12" stroke="#222" stroke-width="1.500"/>',
    bucket: '<path d="M3 6l5-4 5 4-5 5z" fill="#dce8f8" stroke="#456"/><path d="M12 6q3 1 2 5" fill="none" stroke="#3767c4" stroke-width="2"/><path d="M1 12h14v3H1z" fill="#f4f000"/>',
    brush: '<path d="M3 10l5-2 6-6-3 7-5 2z" fill="#9fc1ec" stroke="#345"/><path d="M1 12h14v3H1z" fill="#0a1be0"/>',
    fontcolor: '<path d="M4 11l4-9 4 9M5.500 8h5" fill="none" stroke="#2d4a94" stroke-width="1.700"/><path d="M1 12h14v3H1z" fill="#e02014"/>',
    play: '<path d="M6 4l5 4-5 4z" fill="#7e8c60"/>',
    record: '<circle cx="8" cy="8" r="3" fill="#d8321c"/>',
    vbe: '<path d="M2 3h9v9H2z" fill="#dfe8f6" stroke="#456"/><path d="M4 6l6-4 4 5-5 3z" fill="#c83a2c"/><path d="M3 9l4-1 2 5-4 1z" fill="#e8c437"/>',
    hammer: '<path d="M3 4l2-2 4 2-1 3-2-1-3 0z" fill="#ddd" stroke="#666"/><path d="M6 6l7 7M12 3l-8 10" stroke="#777" stroke-width="1.800"/>',
    design: '<path d="M2 3v10h12z" fill="#87b4e8" stroke="#2a5aa8"/><path d="M14 1L6 10" stroke="#c08020" stroke-width="2"/><path d="M1 14h14" stroke="#345" stroke-width="1.500"/>',
    swirl: '<path d="M8 8q-4-5-6 0t6 1 6-3-6 2" fill="none" stroke="#e03c2c" stroke-width="2.400"/><path d="M8 8q4-5 6-1t-5 4" fill="none" stroke="#e8a030" stroke-width="2"/><path d="M3 11q3 2 6-2" stroke="#3c7ad0" fill="none" stroke-width="2"/>',
    props: '<path d="M2 6h9v8H2z" fill="#fff" stroke="#567"/><path d="M4 5l4-3 6 1-2 4-7 1z" fill="#e2c45c" stroke="#8a6c20"/><path d="M4 9h5M4 11h5" stroke="#567"/>',
    code: '<path d="M2 2h12v8H2z" fill="#e3edfa" stroke="#456fae"/><path d="M2 3h12" stroke="#2d55a4" stroke-width="2"/><circle cx="7" cy="9" r="3" fill="#fff" stroke="#456"/><path d="M9 11l3 3" stroke="#b07a28" stroke-width="2"/>',
    check: '<path d="M3 3h10v10H3z" fill="#fff" stroke="#9a9a9a"/><path d="M5 7l3 3 4-5" fill="none" stroke="#777" stroke-width="1.600"/>',
    field: '<path d="M1 4h14v9H1z" fill="#f4f4f4" stroke="#999"/><path d="M4 7v4M7 5v6h2V8H7M12 6v6" fill="none" stroke="#777"/>',
    button: '<path d="M2 10l3-4h9l-2 5H2z" fill="#c4c4c4" stroke="#aaa"/>',
    radio: '<circle cx="8" cy="8" r="5" fill="#fff" stroke="#999"/><circle cx="8" cy="8" r="2" fill="#777"/>',
    combo: '<path d="M1 4h14v9H1z" fill="#f0f0f0" stroke="#999"/><path d="M9 4v9M10 7h4l-2 3z" fill="#666" stroke="#999"/><path d="M3 7h4M3 10h4" stroke="#999"/>',
    list: '<path d="M2 2h12v12H2zM2 6h12M10 6v8M5 8h3M5 11h3" fill="#eee" stroke="#888"/><path d="M10 8h4l-2 2z" fill="#555"/>',
    toggle: '<path d="M5 3h8v4H5zM3 9h8v4H3z" fill="#c9c9c9" stroke="#888"/>',
    spin: '<path d="M3 2h10v5H3zM3 9h10v5H3z" fill="#ccc" stroke="#999"/><path d="M6 6h4L8 3zM6 10h4l-2 3z" fill="#333"/>',
    label: '<path d="M3 13L8 2l5 11M5 9h6" fill="none" stroke="#777" stroke-width="1.700"/>',
    image: '<path d="M2 2h12v12H2z" fill="#ddd" stroke="#888"/><circle cx="8" cy="7" r="3" fill="#999"/><path d="M3 13l4-4 6 4z" fill="#777"/>',
    more: '<path d="M3 3l6 3-4 4M9 3l4 8M2 12h12" fill="none" stroke="#888" stroke-width="1.500" stroke-dasharray="3 1"/>',
    frame: '<path d="M2 4h12v10H2zM5 2h2M9 2h2" fill="none" stroke="#777"/>',
    dots: '<path d="M2 3h12M2 6h12M2 9h12M2 12h12" stroke="#d0661c" stroke-width="1.300" stroke-dasharray="1.500 1.500"/>',
    scroll: '<path d="M5 2h7v4l-3 8H7V7z" fill="#ddd" stroke="#999"/>',
    line: '<path d="M3 3l10 9" stroke="#8a9870" stroke-width="1.300"/>',
    arrow: '<path d="M3 3l8 7" stroke="#8a9870" stroke-width="1.300"/><path d="M13 13L8 11l3-4z" fill="#8a9870"/>',
    rect: '<path d="M1 3h14v10H1z" fill="none" stroke="#7c8a62"/>',
    oval: '<ellipse cx="8" cy="8" rx="7" ry="5" fill="none" stroke="#7c8a62"/>',
    textbox: '<path d="M2 3h12v10H2z" fill="#fff" stroke="#999"/><path d="M4 8l1.500-3L7 8M8 6h5M4 10h9" fill="none" stroke="#777"/>',
    art: '<path d="M12 2L2 12h5zM13 2v11H9z" fill="#b5b5b5" stroke="#999"/>',
    diagram: '<circle cx="8" cy="8" r="5" fill="none" stroke="#888" stroke-width="2.500" stroke-dasharray="4 2"/>',
    lines: '<path d="M2 3.500h12" stroke="#111"/><path d="M2 7.500h12" stroke="#111" stroke-width="2"/><path d="M2 12h12" stroke="#111" stroke-width="3"/>',
    dashes: '<path d="M1 4h14M1 7h14M1 10h14M1 13h14" stroke="#444" stroke-dasharray="2 1"/>',
    arrows: '<path d="M2 4h11M3 8h11M2 12h11" stroke="#111" stroke-width="1.300"/><path d="M11 2l4 2-4 2zM5 6L1 8l4 2zM11 10l4 2-4 2z"/>',
    shadow: '<path d="M5 5h9v9H5z" fill="#4c6c44"/><path d="M3 3h9v9H3z" fill="#79b67c" stroke="#48784a"/>',
    cube: '<path d="M2 5h9v9H2z" fill="#79b67c" stroke="#3c6a40"/><path d="M2 5l3-3h9l-3 3zM11 5l3-3v9l-3 3z" fill="#b4d9a8" stroke="#3c6a40"/>',
    drop: '<path d="M5 7h6l-3 3z"/>'
};

// characters used as button faces
const glyphs = {
    bold: 'B', italic: '<i>I</i>', under: '<u>U</u>', dollar: '<b>$</b>',
    percent: '%', comma: '<b>,</b>', euro: '<b>€</b>', Aa: '<i>Aa</i>', ab: 'ab|'
};
const serif = ['bold', 'italic', 'under', 'comma', 'Aa'];

const svg = (name, w = 16) => `<svg width="${w}" height="16" viewBox="${(16 - w) / 2} 0 ${w} 16">${icons[name]}</svg>`;
const arrowDown = '<svg width="6" height="4" viewBox="0 0 6 4"><path d="M0 0h6L3 3z"/></svg>';

// "-" disabled, "+" pressed, "<" narrower button
function tool(token) {
    if (token === '|') return '<span class="sep"></span>';
    if (token === ':') return '<span class="grip"></span>';
    if (token === 'v') return `<button class="drop" aria-label="More">${svg('drop', 8)}</button>`;
    if (token === ']') return '<button class="cap" aria-label="Options"><svg width="7" height="8" viewBox="0 0 7 8"><path d="M1 1h5M1 4h5L3.500 7z" stroke="#fff" stroke-width=".6"/></svg></button>';
    if (token === 'zoom') return `<label class="combo zoom"><select aria-label="Zoom"><option>100%</option></select>${arrowDown}</label>`;
    if (token === 'fontname') return `<label class="combo font"><select aria-label="Font"><option>Arial</option></select>${arrowDown}</label>`;
    if (token === 'size') return `<label class="combo size"><select aria-label="Size"><option>10</option></select>${arrowDown}</label>`;
    if (token === 'security') return '<button class="word">Security...</button>';
    if (token === 'shapes') return `<button class="autoshapes">oShapes ${arrowDown}</button>`;
    const states = { '-': 'off', '+': 'on', '<': 'half' };
    const state = states[token[0]] || '';
    const name = state ? token.slice(1) : token;
    const face = glyphs[name]
        ? `<span class="glyph ${serif.includes(name) ? 'serif' : ''}">${glyphs[name]}</span>`
        : svg(name);
    return `<button class="tool ${state}" aria-label="${name}">${face}</button>`;
}

function bar(id, tokens, cls = '') {
    const html = tokens.split(' ').map(tool).join('');
    document.getElementById(id).insertAdjacentHTML('beforeend', `<div class="bar ${cls}">${html}</div>`);
}

bar('row1', 'save | print preview | -spell research | cut copy paste v painter | undo v -redo v | euroconv -link -sum v sort | zoom ]', 'main');
bar('row1', ': fontname size | +bold italic under | left +center right -merge | dollar percent comma euro incdec decdec | outdent indent | borders v bucket v fontcolor v ]', 'fill');
bar('row2', '<lock <printdoc ]');
bar('row2', ': play record security | vbe +hammer design | swirl ]');
bar('row2', ': design props code | -check -field -button -radio -combo -list -toggle -spin -spin -label -image | -more ]');
bar('row2', ': -Aa -ab | -frame -button | -check -radio | -combo -list | -list -list | -spin -spin | -toggle -image | +dots -scroll ]');
bar('row3', 'shapes -line -arrow rect oval -textbox -art -diagram -image -image | bucket v brush v fontcolor v lines dashes arrows shadow cube ]');

// worksheet
const months = ['January', 'February', 'March', 'April', 'May', 'June', 'July', 'August', 'September', 'October', 'November', 'December'];
const colors = ['jan', 'feb', 'mar', 'apr', 'may', 'jun', 'jul', 'aug', 'sep-m', 'oct', 'nov', 'dec', ''];
const rows = [
    ['', 24, ''], ['arge', 25, ''], ['harge', 24, 'above'], ['Sales', 27, 'strong'],
    ['', 25, ''], ['st', 24, 'above'], ['penses', 27, 'strong toright'],
    ['ees', 25, ''], ['', 24, ''], ['s', 25, 'above'], ['Fees', 26, 'strong toright'],
    ['s', 25, ''], ['', 40, 'strong grand']
];

document.getElementById('letters').innerHTML =
    '<tr><th></th>' + [...'BCDEFGHIJKLMN'].map(c => `<th>${c}</th>`).join('') + '<th></th></tr>';

let body = '<tr class="months"><td></td>' +
    [...months, 'Y-T-D Total'].map((m, i) => `<th class="${colors[i]}">${m}</th>`).join('') + '<td></td></tr>';
rows.forEach(([label, height, cls]) => {
    body += `<tr class="money h${height} ${cls}"><td>${label}</td>` +
        colors.map(c => `<td class="${c}">$0.00</td>`).join('') + '<td></td></tr>';
});
['tall', '', 'tall', '', ''].forEach(cls => {
    body += `<tr class="empty ${cls}">${'<td></td>'.repeat(15)}</tr>`;
});
document.getElementById('cells').innerHTML = body;

// sheet tabs
const tabs = [
    ['entory', '#ff00ff', 'first light'], ['Jan', '#9999ff'], ['Feb', '#cc99ff'], ['Mar', '#ccffcc'],
    ['Apr', '#ccccff'], ['May', '#ffcccc'], ['Jun', '#ffff99'], ['Jul', '#c0c0c0'], ['Aug', '#99cc00'],
    ['Sep', '#993366', 'light'], ['Oct', '#ffcc99'], ['Nov', '#ff8080'], ['Dec', '#339966', 'light'],
    ['YTD', '#ffffff', 'current']
];
document.getElementById('sheettabs').innerHTML = tabs
    .map(([name, color, cls = '']) => `<button class="${cls}" style="background-color: ${color}">${name}</button>`)
    .join('');
```
